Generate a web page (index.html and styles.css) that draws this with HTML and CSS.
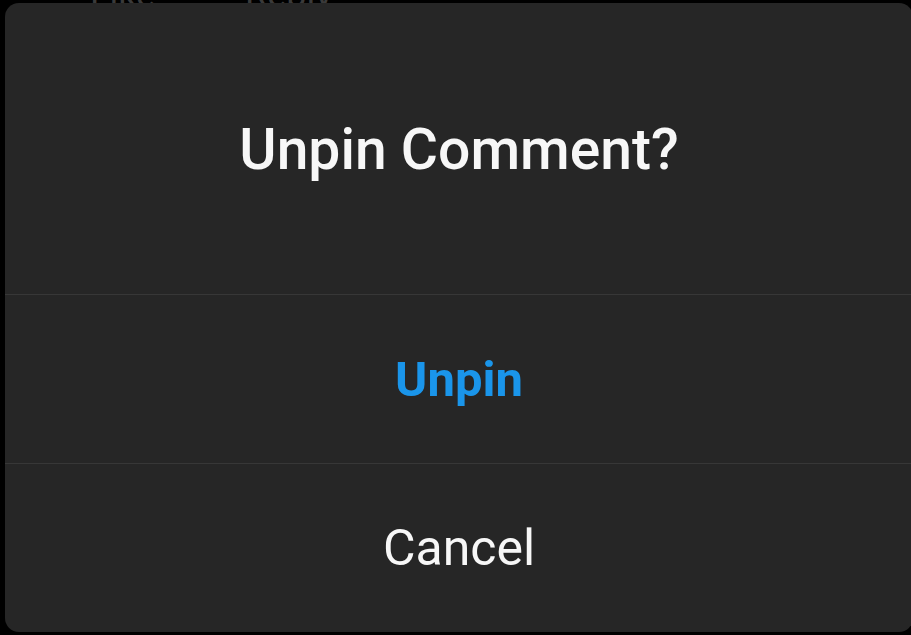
FILE: index.html
```html
<!DOCTYPE html>
<html lang="en">
<head>
  <meta charset="UTF-8" />
  <meta name="viewport" content="width=device-width, initial-scale=1" />
  <title>Unpin Comment</title>
  <link rel="stylesheet" href="styles.css">
</head>
<body>

  <!-- Comment row behind the overlay -->
  <div class="behind">
    <span class="behind-link like">Like</span>
    <span class="behind-link reply">Reply</span>
  </div>

  <div class="dialog" role="dialog">
    <div class="dialog-title">Unpin Comment?</div>
    <button class="dialog-btn primary">Unpin</button>
    <button class="dialog-btn">Cancel</button>
  </div>

</body>
</html>
```

FILE: styles.css
```css
/* Reset & basics */
* {
  box-sizing: border-box;
  font-family: Roboto, 'Noto Sans', sans-serif;
}
body {
  margin: 0;
  width: 911px;
  height: 635px;
  background: #000;
  overflow: hidden;
  position: relative;
}

/* Content under the overlay */
.behind {
  position: absolute;
  top: -26px;
  left: 0;
  right: 0;
  color: #3a3a3a;
  font-size: 36px;
}
.behind-link {
  position: absolute;
}
.like { left: 90px; }
.reply { left: 245px; }

/* Dialog */
.dialog {
  position: relative;
  margin: 3px -2px 0 5px;
  height: 629px;
  background: #262626;
  border-radius: 14px;
  display: grid;
  grid-template-rows: 291px 169px 169px;
  overflow: hidden;
}

.dialog-title {
  display: flex;
  align-items: center;
  justify-content: center;
  padding-top: 2px;
  color: #f7f7f7;
  font-size: 57px;
  font-weight: 500;
}

.dialog-btn {
  background: none;
  border: none;
  border-top: 1px solid #373737;
  margin: 0;
  padding: 0;
  color: #f7f7f7;
  font-size: 50px;
  font-weight: 400;
  cursor: pointer;
}
.dialog-btn.primary {
  color: #1a95ea;
  font-weight: 700;
  font-size: 49px;
}
```
